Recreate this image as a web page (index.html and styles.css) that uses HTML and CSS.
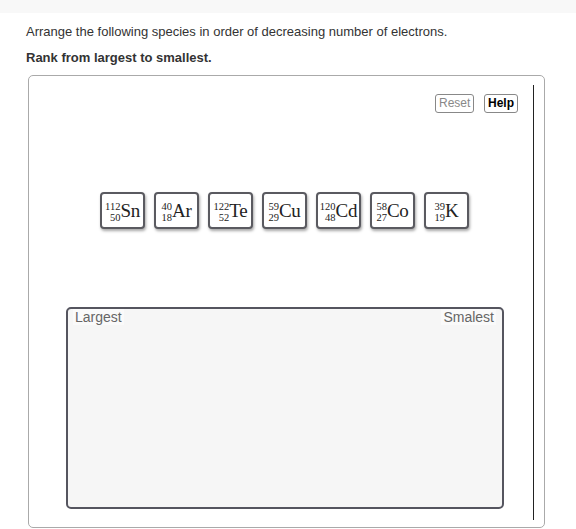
FILE: index.html
```html
<!DOCTYPE html>
<html>
<head>
<meta charset="utf-8">
<link rel="stylesheet" href="styles.css">
</head>
<body>
<div class="topbar"></div>
<div class="content">
  <p class="prompt">Arrange the following species in order of decreasing number of electrons.</p>
  <p class="rank">Rank from largest to smallest.</p>
  <div class="outer">
    <div class="main">
      <div class="toolbar">
        <button class="btn reset">Reset</button>
        <button class="btn help">Help</button>
      </div>
      <div class="tiles">
        <div class="tile"><span class="iso"><span class="a">112</span><span class="z">50</span></span><span class="sym">Sn</span></div>
        <div class="tile"><span class="iso"><span class="a">40</span><span class="z">18</span></span><span class="sym">Ar</span></div>
        <div class="tile"><span class="iso"><span class="a">122</span><span class="z">52</span></span><span class="sym">Te</span></div>
        <div class="tile"><span class="iso"><span class="a">59</span><span class="z">29</span></span><span class="sym">Cu</span></div>
        <div class="tile"><span class="iso"><span class="a">120</span><span class="z">48</span></span><span class="sym">Cd</span></div>
        <div class="tile"><span class="iso"><span class="a">58</span><span class="z">27</span></span><span class="sym">Co</span></div>
        <div class="tile"><span class="iso"><span class="a">39</span><span class="z">19</span></span><span class="sym">K</span></div>
      </div>
      <div class="zone">
        <div class="zone-labels">
          <span class="lbl">Largest</span>
          <span class="lbl">Smalest</span>
        </div>
      </div>
    </div>
    <div class="vline"></div>
  </div>
</div>
</body>
</html>
```

FILE: styles.css
```css
html, body {
  margin: 0;
  padding: 0;
  background: #fff;
  font-family: "Liberation Sans", Arial, sans-serif;
  color: #333;
}
.topbar {
  height: 13px;
  background: #f8f8f8;
}
.content {
  padding-left: 26px;
}
.prompt {
  margin: 0;
  padding-top: 11px;
  font-size: 13px;
  line-height: 16px;
  color: #333;
}
.rank {
  margin: 0;
  padding-top: 10px;
  font-size: 13px;
  line-height: 16px;
  font-weight: bold;
  color: #333;
}
.outer {
  margin-top: 9px;
  margin-left: 2px;
  width: 515px;
  height: 451px;
  border: 1px solid #aaa;
  border-radius: 5px;
  display: flex;
}
.main {
  width: 504px;
}
.vline {
  width: 0;
  border-left: 1px solid #222;
  margin-top: 9px;
  margin-bottom: 7px;
}
.toolbar {
  display: flex;
  justify-content: flex-end;
  gap: 10px;
  margin-top: 18px;
  padding-right: 15px;
}
.btn {
  font-family: "Liberation Sans", Arial, sans-serif;
  font-size: 12px;
  height: 19px;
  padding: 0 3px;
  background: #fff;
  border: 1px solid #888;
  border-radius: 3px;
  line-height: 17px;
}
.reset {
  color: #888;
  width: 39px;
}
.help {
  color: #000;
  font-weight: bold;
  width: 34px;
}
.tiles {
  display: flex;
  gap: 9px;
  margin-top: 79px;
  padding-left: 71px;
}
.tile {
  box-sizing: border-box;
  height: 37px;
  width: 45px;
  border: 2px solid #5a5a60;
  border-radius: 4px;
  background: #fff;
  box-shadow: 1px 2px 3px rgba(0,0,0,0.35);
  display: flex;
  align-items: center;
  justify-content: center;
  padding: 0 1px;
  font-family: "Liberation Serif", "Times New Roman", serif;
  color: #222;
}
.iso {
  display: flex;
  flex-direction: column;
  align-items: flex-end;
  font-size: 10.5px;
  line-height: 11px;
  margin-top: 2px;
}
.iso .a, .iso .z {
  display: block;
  height: 11px;
}
.sym {
  font-size: 19px;
  line-height: 19px;
  letter-spacing: -0.3px;
}
.zone {
  margin-top: 78px;
  margin-left: 37px;
  box-sizing: border-box;
  width: 438px;
  height: 202px;
  border: 2px solid #55555f;
  border-radius: 5px;
  background: #f6f6f6;
}
.zone-labels {
  display: flex;
  justify-content: space-between;
  padding: 0 6px 0 5px;
}
.lbl {
  font-size: 14px;
  line-height: 16px;
  color: #666;
  background: #fafafa;
  padding: 0 2px;
}
```
